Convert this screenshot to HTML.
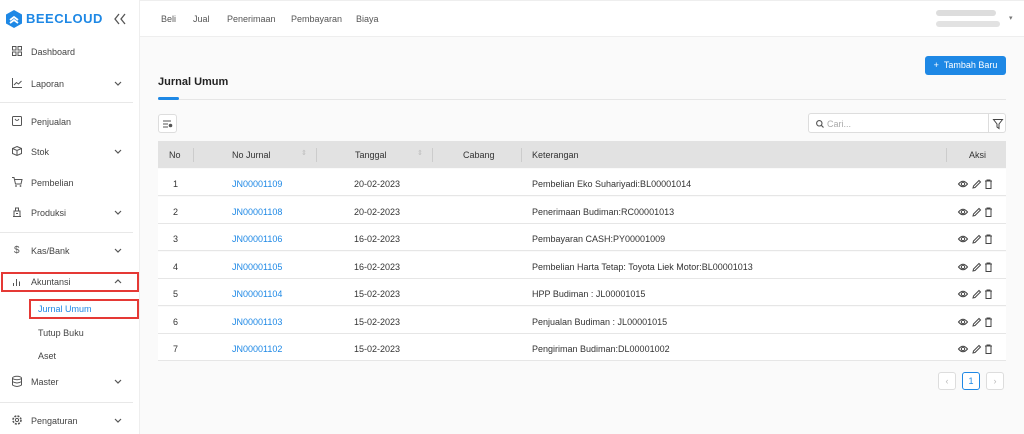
<!DOCTYPE html>
<html><head><meta charset="utf-8"><style>
*{box-sizing:border-box;margin:0;padding:0}
body{width:1024px;height:434px;overflow:hidden;font-family:"Liberation Sans",sans-serif;font-size:9px;color:#333;background:#fafafa;position:relative}
.sb{position:absolute;left:0;top:0;width:140px;height:434px;background:#fff;border-right:1px solid #eee}
.top{position:absolute;left:140px;top:0;right:0;height:37px;background:#fff;border-bottom:1px solid #eee;border-top:1px solid #eee}
.a{position:absolute;white-space:nowrap}
.mi{position:absolute;left:31px;font-size:9px;color:#444}
.ic{position:absolute;left:12px}
.chev{position:absolute;left:114px}
.sep{position:absolute;left:0;width:133px;height:1px;background:#e8e8e8}
.th{position:absolute;top:141px;left:158px;width:848px;height:27px;background:#e2e2e2}
.row{position:absolute;left:158px;width:848px;height:27px;border-bottom:1px solid #e6e6e6;background:#fff}
.row span{position:absolute;top:10px}
.lk{color:#1e88e5}
.div{position:absolute;top:7px;width:1px;height:14px;background:#ccc}
svg{overflow:visible}
</style></head><body>
<div class="top">
<div class="a" style="left:21px;top:13px;color:#555">Beli</div>
<div class="a" style="left:53px;top:13px;color:#555">Jual</div>
<div class="a" style="left:87px;top:13px;color:#555">Penerimaan</div>
<div class="a" style="left:151px;top:13px;color:#555">Pembayaran</div>
<div class="a" style="left:216px;top:13px;color:#555">Biaya</div>
<div class="a" style="left:796px;top:9px;width:60px;height:6px;background:#ddd;border-radius:3px"></div>
<div class="a" style="left:796px;top:20px;width:64px;height:6px;background:#e2e2e2;border-radius:3px"></div>
<div class="a" style="left:869px;top:13px;font-size:7px;color:#777">▾</div>
</div>
<div class="sb">
<svg class="a" style="left:6px;top:10px" width="16" height="18" viewBox="0 0 16 18"><path d="M8 0L16 4.5V13.5L8 18L0 13.5V4.5Z" fill="#1e88e5"/><path d="M4 10L8 7L12 10M4 13L8 10L12 13" stroke="#fff" stroke-width="1.8" fill="none"/></svg>
<div class="a" style="left:26px;top:11px;font-size:13px;font-weight:bold;color:#1e88e5;letter-spacing:0.5px">BEECLOUD</div>
<svg class="a" style="left:114px;top:14px" width="12" height="10" viewBox="0 0 12 10"><path d="M5 0L1 5L5 10M11 0L7 5L11 10" stroke="#555" stroke-width="1.3" fill="none"/></svg>

<svg class="ic" style="top:46px" width="10" height="10"><g stroke="#555" fill="none" stroke-width="1"><rect x="0.5" y="0.5" width="3.5" height="3.5"/><rect x="6" y="0.5" width="3.5" height="3.5"/><rect x="0.5" y="6" width="3.5" height="3.5"/><rect x="6" y="6" width="3.5" height="3.5"/></g></svg>
<div class="mi" style="top:47px">Dashboard</div>
<svg class="ic" style="top:78px" width="10" height="10"><path d="M0.5 0V9.5H10M2 7L4.5 4.5L6.5 6L9.5 3" stroke="#555" fill="none"/></svg>
<div class="mi" style="top:79px">Laporan</div>
<div class="sep" style="top:102px"></div>
<svg class="ic" style="top:116px" width="10" height="10"><rect x="0.5" y="0.5" width="9" height="9" rx="1" stroke="#555" fill="none"/><path d="M3 3Q5 6 7 3" stroke="#555" fill="none"/></svg>
<div class="mi" style="top:117px">Penjualan</div>
<svg class="ic" style="top:146px" width="10" height="10"><path d="M5 0.5L9.5 2.5V7.5L5 9.5L0.5 7.5V2.5ZM0.5 2.5L5 4.5L9.5 2.5M5 4.5V9.5" stroke="#555" fill="none"/></svg>
<div class="mi" style="top:147px">Stok</div>
<svg class="ic" style="top:177px" width="11" height="10"><path d="M0 0.5H2L3.5 7H9L10 2.5H2.5" stroke="#555" fill="none"/><circle cx="4" cy="9" r="0.9" fill="#555"/><circle cx="8.5" cy="9" r="0.9" fill="#555"/></svg>
<div class="mi" style="top:178px">Pembelian</div>
<svg class="ic" style="top:207px" width="10" height="10"><path d="M1 9.5H9M2 9.5V4H8V9.5M3.5 4V1H6.5V4M4 6.5H6" stroke="#555" fill="none"/></svg>
<div class="mi" style="top:208px">Produksi</div>
<div class="sep" style="top:232px"></div>
<div class="a" style="left:14px;top:245px;font-size:10px;color:#555">$</div>
<div class="mi" style="top:246px">Kas/Bank</div>
<div class="a" style="left:1px;top:272px;width:138px;height:20px;border:2px solid #e53935"></div>
<svg class="ic" style="top:277px" width="10" height="10"><path d="M1.5 9V6M4.5 9V2M7.5 9V4.5" stroke="#555" fill="none"/></svg>
<div class="mi" style="top:277px">Akuntansi</div>
<div class="a" style="left:29px;top:299px;width:110px;height:20px;border:2px solid #e53935"></div>
<div class="a" style="left:38px;top:304px;color:#1e88e5">Jurnal Umum</div>
<div class="a" style="left:38px;top:328px;color:#444">Tutup Buku</div>
<div class="a" style="left:38px;top:351px;color:#444">Aset</div>
<svg class="ic" style="top:376px" width="10" height="11"><ellipse cx="5" cy="2" rx="4.5" ry="1.7" stroke="#555" fill="none"/><path d="M0.5 2V9Q5 12 9.5 9V2M0.5 5.5Q5 8.5 9.5 5.5" stroke="#555" fill="none"/></svg>
<div class="mi" style="top:377px">Master</div>
<div class="sep" style="top:402px"></div>
<svg class="ic" style="top:415px" width="10" height="10"><circle cx="5" cy="5" r="4" stroke="#555" stroke-width="1.6" stroke-dasharray="2 1.2" fill="none"/><circle cx="5" cy="5" r="1.6" stroke="#555" fill="none"/></svg>
<div class="mi" style="top:416px">Pengaturan</div>
<svg class="chev" style="top:81px" width="8" height="5"><path d="M1 1L4 4L7 1" stroke="#555" stroke-width="1.2" fill="none"/></svg>
<svg class="chev" style="top:149px" width="8" height="5"><path d="M1 1L4 4L7 1" stroke="#555" stroke-width="1.2" fill="none"/></svg>
<svg class="chev" style="top:210px" width="8" height="5"><path d="M1 1L4 4L7 1" stroke="#555" stroke-width="1.2" fill="none"/></svg>
<svg class="chev" style="top:248px" width="8" height="5"><path d="M1 1L4 4L7 1" stroke="#555" stroke-width="1.2" fill="none"/></svg>
<svg class="chev" style="top:279px" width="8" height="5"><path d="M1 4L4 1L7 4" stroke="#555" stroke-width="1.2" fill="none"/></svg>
<svg class="chev" style="top:379px" width="8" height="5"><path d="M1 1L4 4L7 1" stroke="#555" stroke-width="1.2" fill="none"/></svg>
<svg class="chev" style="top:418px" width="8" height="5"><path d="M1 1L4 4L7 1" stroke="#555" stroke-width="1.2" fill="none"/></svg>
</div>
<div class="a" style="left:925px;top:56px;width:81px;height:19px;background:#1e88e5;border-radius:3px;color:#fff;text-align:center;line-height:19px">+ &nbsp;Tambah Baru</div>
<div class="a" style="left:158px;top:76px;font-size:11px;font-weight:bold;color:#222">Jurnal Umum</div>
<div class="a" style="left:158px;top:99px;width:848px;height:1px;background:#e6e6e6"></div>
<div class="a" style="left:158px;top:97px;width:21px;height:3px;background:#1e88e5;border-radius:2px"></div>
<div class="a" style="left:158px;top:114px;width:19px;height:19px;border:1px solid #ddd;border-radius:3px;background:#fff"><svg style="position:absolute;left:4px;top:5px" width="10" height="8"><path d="M0 1H8M0 4H5M0 7H5" stroke="#555"/><circle cx="7.5" cy="5.5" r="1.8" fill="#555"/></svg></div>
<div class="a" style="left:808px;top:113px;width:181px;height:20px;border:1px solid #ddd;border-radius:3px 0 0 3px;background:#fff"><svg style="position:absolute;left:7px;top:6px" width="8" height="8"><circle cx="3.3" cy="3.3" r="2.7" stroke="#555" stroke-width="1.1" fill="none"/><path d="M5.3 5.3L7.5 7.5" stroke="#555" stroke-width="1.2"/></svg><span style="position:absolute;left:18px;top:5px;color:#aaa">Cari...</span></div>
<div class="a" style="left:988px;top:113px;width:18px;height:20px;border:1px solid #ddd;border-radius:0 3px 3px 0;background:#fff"><svg style="position:absolute;left:4px;top:5px" width="10" height="10"><path d="M0.5 0.5H9.5L6 5V9.5L4 8V5Z" stroke="#444" fill="none"/></svg></div>
<div class="th">
<span class="a" style="left:11px;top:9px">No</span><div class="div" style="left:35px"></div>
<span class="a" style="left:74px;top:9px">No Jurnal</span><span class="a" style="left:143px;top:8px;font-size:7px;color:#bbb">⇕</span><div class="div" style="left:158px"></div>
<span class="a" style="left:197px;top:9px">Tanggal</span><span class="a" style="left:259px;top:8px;font-size:7px;color:#bbb">⇕</span><div class="div" style="left:274px"></div>
<span class="a" style="left:305px;top:9px">Cabang</span><div class="div" style="left:363px"></div>
<span class="a" style="left:374px;top:9px">Keterangan</span><div class="div" style="left:788px"></div>
<span class="a" style="left:811px;top:9px">Aksi</span>
</div>
<div id="rows"></div>
<script>
var d=[["JN00001109","20-02-2023","Pembelian Eko Suhariyadi:BL00001014"],["JN00001108","20-02-2023","Penerimaan Budiman:RC00001013"],["JN00001106","16-02-2023","Pembayaran CASH:PY00001009"],["JN00001105","16-02-2023","Pembelian Harta Tetap: Toyota Liek Motor:BL00001013"],["JN00001104","15-02-2023","HPP Budiman : JL00001015"],["JN00001103","15-02-2023","Penjualan Budiman : JL00001015"],["JN00001102","15-02-2023","Pengiriman Budiman:DL00001002"]];
var ic='<svg style="position:absolute;left:800px;top:10px" width="36" height="10"><path d="M0.5 5Q5 -0.5 9.5 5Q5 10.5 0.5 5Z" stroke="#444" fill="none"/><circle cx="5" cy="5" r="1.7" stroke="#444" fill="none"/><path d="M15 9L15.5 7L21 1.5L22.5 3L17 8.5Z" stroke="#444" fill="none"/><path d="M27 2H34M29 2V1H32V2M28 2.5V9.5H33V2.5" stroke="#444" fill="none"/></svg>';
var h="";d.forEach(function(r,i){h+='<div class="row" style="top:'+(169+i*27.5)+'px"><span style="left:15px">'+(i+1)+'</span><span class="lk" style="left:74px">'+r[0]+'</span><span style="left:196px">'+r[1]+'</span><span style="left:374px">'+r[2]+'</span>'+ic+'</div>'});
document.getElementById("rows").innerHTML=h;
</script>
<div class="a" style="left:938px;top:372px;width:18px;height:18px;border:1px solid #ddd;border-radius:3px;background:#fff;text-align:center;line-height:16px;color:#bbb">‹</div>
<div class="a" style="left:962px;top:372px;width:18px;height:18px;border:1px solid #1e88e5;border-radius:3px;background:#fff;text-align:center;line-height:16px;color:#1e88e5">1</div>
<div class="a" style="left:986px;top:372px;width:18px;height:18px;border:1px solid #ddd;border-radius:3px;background:#fff;text-align:center;line-height:16px;color:#bbb">›</div>
</body></html>
